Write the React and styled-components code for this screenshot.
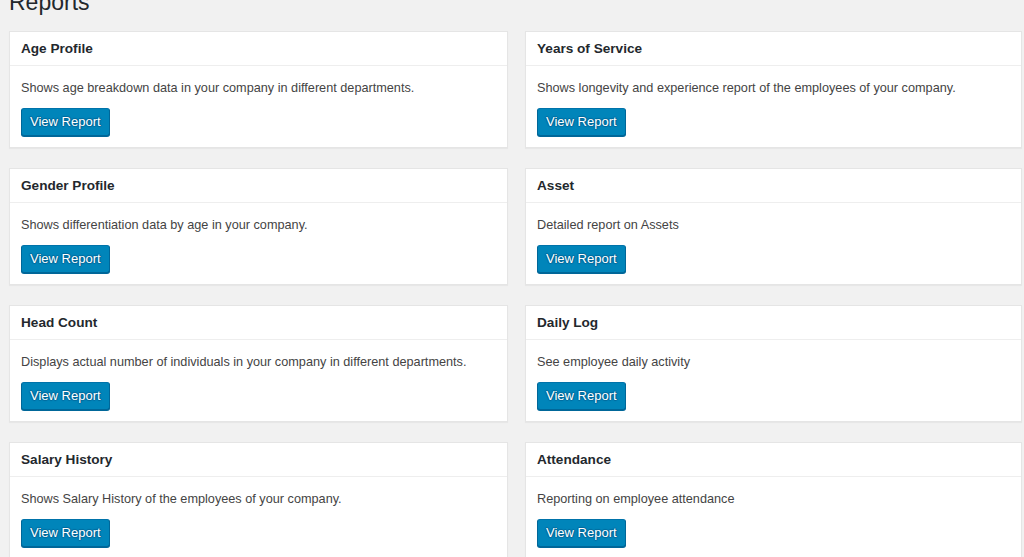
import React from "react";
import styled, { createGlobalStyle } from "styled-components";

const Global = createGlobalStyle`
  html, body { margin: 0; padding: 0; background: #f1f1f1; overflow: hidden; }
  body { font-family: "Liberation Sans", Arial, sans-serif; color: #444; }
`;

const Page = styled.div`
  padding: 0 2px 0 9px;
`;

const Title = styled.h1`
  margin: -12px 0 14px;
  font-size: 23px;
  font-weight: 400;
  line-height: 29px;
  color: #23282d;
`;

const Grid = styled.div`
  display: grid;
  grid-template-columns: 499px 497px;
  column-gap: 17px;
  row-gap: 20px;
`;

const Card = styled.div`
  background: #fff;
  border: 1px solid #e5e5e5;
  box-shadow: 0 1px 1px rgba(0, 0, 0, 0.04);
`;

const CardHeader = styled.h2`
  margin: 0;
  padding: 8px 11px 7px;
  font-size: 13.6px;
  line-height: 18px;
  font-weight: 700;
  color: #23282d;
  border-bottom: 1px solid #eee;
`;

const CardBody = styled.div`
  padding: 13px 11px 11px;
  display: flex;
  flex-direction: column;
  align-items: flex-start;
  gap: 10px;
`;

const Desc = styled.p`
  margin: 0;
  font-size: 12.7px;
  line-height: 19px;
  color: #444;
`;

const Button = styled.button`
  height: 28px;
  padding: 0 8px;
  font-family: inherit;
  font-size: 13px;
  line-height: 26px;
  color: #fff;
  background: #0085ba;
  border: 1px solid;
  border-color: #0073aa #006799 #006799;
  border-radius: 3px;
  box-shadow: 0 1px 0 #006799;
  text-shadow: 0 -1px 1px #006799, 1px 0 1px #006799, 0 1px 1px #006799, -1px 0 1px #006799;
  cursor: pointer;
`;

const reports = [
  ["Age Profile", "Shows age breakdown data in your company in different departments."],
  ["Years of Service", "Shows longevity and experience report of the employees of your company."],
  ["Gender Profile", "Shows differentiation data by age in your company."],
  ["Asset", "Detailed report on Assets"],
  ["Head Count", "Displays actual number of individuals in your company in different departments."],
  ["Daily Log", "See employee daily activity"],
  ["Salary History", "Shows Salary History of the employees of your company."],
  ["Attendance", "Reporting on employee attendance"],
];

export default function App() {
  return (
    <>
      <Global />
      <Page>
        <Title>Reports</Title>
        <Grid>
          {reports.map(([t, d]) => (
            <Card key={t}>
              <CardHeader>{t}</CardHeader>
              <CardBody>
                <Desc>{d}</Desc>
                <Button>View Report</Button>
              </CardBody>
            </Card>
          ))}
        </Grid>
      </Page>
    </>
  );
}
